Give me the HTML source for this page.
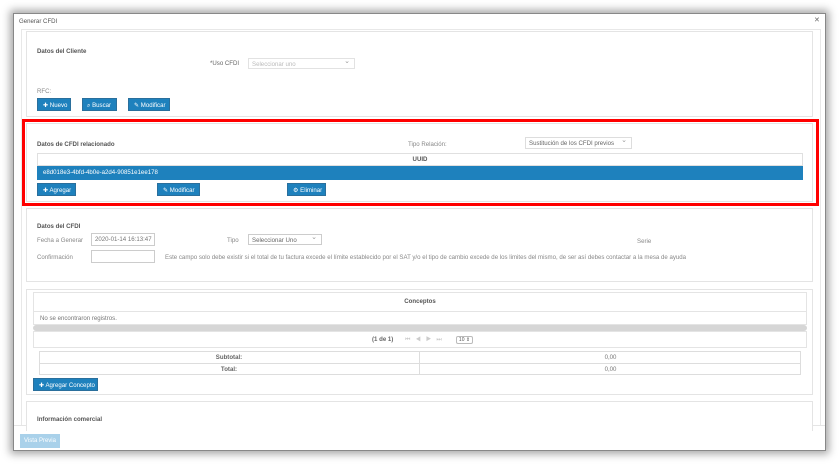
<!DOCTYPE html>
<html><head><meta charset="utf-8"><style>
*{box-sizing:border-box;margin:0;padding:0}
body{width:840px;height:465px;background:#fff;font-family:"Liberation Sans",sans-serif;position:relative;overflow:hidden;color:#777;font-size:6.1px}
.a{position:absolute;white-space:nowrap}
.dlg{left:13px;top:13px;width:813px;height:438px;background:#fff;border:1px solid #888;box-shadow:0 0 8px 3px rgba(0,0,0,.35)}
.panel{position:absolute;border:1px solid #e4e4e4;background:#fff}
.t{position:absolute;font-weight:bold;color:#555;font-size:6.1px;white-space:nowrap}
.l{position:absolute;font-size:6.1px;color:#888;white-space:nowrap}
.btn{position:absolute;background:#1e81bd;color:#fff;font-size:6.1px;height:13px;line-height:13px;padding-left:5px;border:1px solid #2a6f9c;white-space:nowrap;overflow:hidden}
.inp{position:absolute;border:1px solid #ccc;background:#fff;font-size:6.1px;color:#777;padding-left:3px;line-height:11px;white-space:nowrap}
.sel:after{content:"⌄";position:absolute;right:4px;top:-3px;font-size:7px;color:#999}
</style></head><body>
<div class="a dlg"></div>
<div class="t" style="left:19px;top:18px;font-weight:normal;color:#555">Generar CFDI</div>
<div class="a" style="left:814px;top:16px;color:#666;font-size:7px">✕</div>
<div class="a" style="left:21px;top:29px;width:800px;height:397px;border:1px solid #e8e8e8;border-bottom:none"></div>
<div class="a" style="left:14px;top:425px;width:811px;height:1px;background:#e5e5e5"></div>
<div class="a" style="left:20px;top:434px;width:40px;height:14px;background:#a9d1ea;color:#fff;font-size:6px;line-height:14px;text-align:center">Vista Previa</div>

<div class="panel" style="left:26px;top:31px;width:787px;height:86px"></div>
<div class="t" style="left:37px;top:48px">Datos del Cliente</div>
<div class="l" style="left:210px;top:60px;color:#666">*Uso CFDI</div>
<div class="inp sel" style="left:248px;top:58px;width:107px;height:11px;color:#bbb;border-color:#e2e2e2">Seleccionar uno</div>
<div class="l" style="left:37px;top:88px">RFC:</div>
<div class="btn" style="left:37px;top:98px;width:34px">✚ Nuevo</div>
<div class="btn" style="left:82px;top:98px;width:35px;padding-left:4px">&#x2315; Buscar</div>
<div class="btn" style="left:128px;top:98px;width:42px">✎ Modificar</div>

<div class="a" style="left:22px;top:119px;width:797px;height:87px;border:3px solid #f00"></div>
<div class="panel" style="left:26px;top:123px;width:787px;height:79px"></div>
<div class="t" style="left:37px;top:141px">Datos de CFDI relacionado</div>
<div class="l" style="left:408px;top:141px">Tipo Relación:</div>
<div class="inp sel" style="left:525px;top:137px;width:107px;height:12px;color:#666;border-color:#ddd">Sustitución de los CFDI previos</div>
<div class="a" style="left:37px;top:153px;width:766px;height:13px;border:1px solid #e0e0e0;text-align:center;font-weight:bold;color:#555;line-height:12px">UUID</div>
<div class="a" style="left:37px;top:166px;width:766px;height:14px;background:#1e81bd;color:#fff;line-height:14px;padding-left:6px">e8d018e3-4bfd-4b0e-a2d4-90851e1ee178</div>
<div class="btn" style="left:37px;top:183px;width:39px">✚ Agregar</div>
<div class="btn" style="left:157px;top:183px;width:43px">✎ Modificar</div>
<div class="btn" style="left:287px;top:183px;width:39px">⚙ Eliminar</div>

<div class="panel" style="left:26px;top:208px;width:787px;height:74px"></div>
<div class="t" style="left:37px;top:223px">Datos del CFDI</div>
<div class="l" style="left:37px;top:237px">Fecha a Generar</div>
<div class="inp" style="left:91px;top:233px;width:64px;height:13px;line-height:12px">2020-01-14 16:13:47</div>
<div class="l" style="left:227px;top:237px">Tipo</div>
<div class="inp sel" style="left:248px;top:234px;width:74px;height:11px;color:#666">Seleccionar Uno</div>
<div class="l" style="left:637px;top:238px">Serie</div>
<div class="l" style="left:37px;top:254px">Confirmación</div>
<div class="inp" style="left:91px;top:250px;width:64px;height:13px"></div>
<div class="l" style="left:165px;top:254px">Este campo solo debe existir si el total de tu factura excede el límite establecido por el SAT y/o el tipo de cambio excede de los limites del mismo, de ser así debes contactar a la mesa de ayuda</div>

<div class="panel" style="left:26px;top:289px;width:787px;height:106px"></div>
<div class="a" style="left:33px;top:292px;width:774px;height:20px;border:1px solid #e4e4e4;text-align:center;font-weight:bold;color:#555;line-height:18px">Conceptos</div>
<div class="a" style="left:33px;top:312px;width:774px;height:13px;border:1px solid #e4e4e4;border-top:none;padding-left:6px;line-height:13px">No se encontraron registros.</div>
<div class="a" style="left:33px;top:325px;width:774px;height:6px;background:#d6d6d6;border-radius:3px"></div>
<div class="a" style="left:33px;top:331px;width:774px;height:17px;border:1px solid #e4e4e4;line-height:16px">
<span class="a" style="left:338px;font-weight:bold;color:#666">(1 de 1)</span>
<span class="a" style="left:371px;color:#ccc;letter-spacing:5px">⏮◀▶⏭</span>
<span class="a" style="left:422px;top:4px;width:17px;height:8px;border:1px solid #bbb;border-radius:2px;font-size:5px;line-height:7px;text-align:center;color:#555">10 ⇕</span></div>
<div class="a" style="left:39px;top:351px;width:762px;height:24px;border:1px solid #ddd"></div>
<div class="a" style="left:39px;top:363px;width:762px;height:1px;background:#ddd"></div>
<div class="a" style="left:419px;top:351px;width:1px;height:24px;background:#ddd"></div>
<div class="a" style="left:39px;top:354px;width:380px;text-align:center;font-weight:bold;color:#666">Subtotal:</div>
<div class="a" style="left:39px;top:366px;width:380px;text-align:center;font-weight:bold;color:#666">Total:</div>
<div class="a" style="left:420px;top:354px;width:381px;text-align:center">0,00</div>
<div class="a" style="left:420px;top:366px;width:381px;text-align:center">0,00</div>
<div class="btn" style="left:33px;top:378px;width:65px">✚ Agregar Concepto</div>

<div class="panel" style="left:26px;top:401px;width:787px;height:30px;border-bottom:none"></div>
<div class="t" style="left:37px;top:416px">Información comercial</div>
</body></html>
